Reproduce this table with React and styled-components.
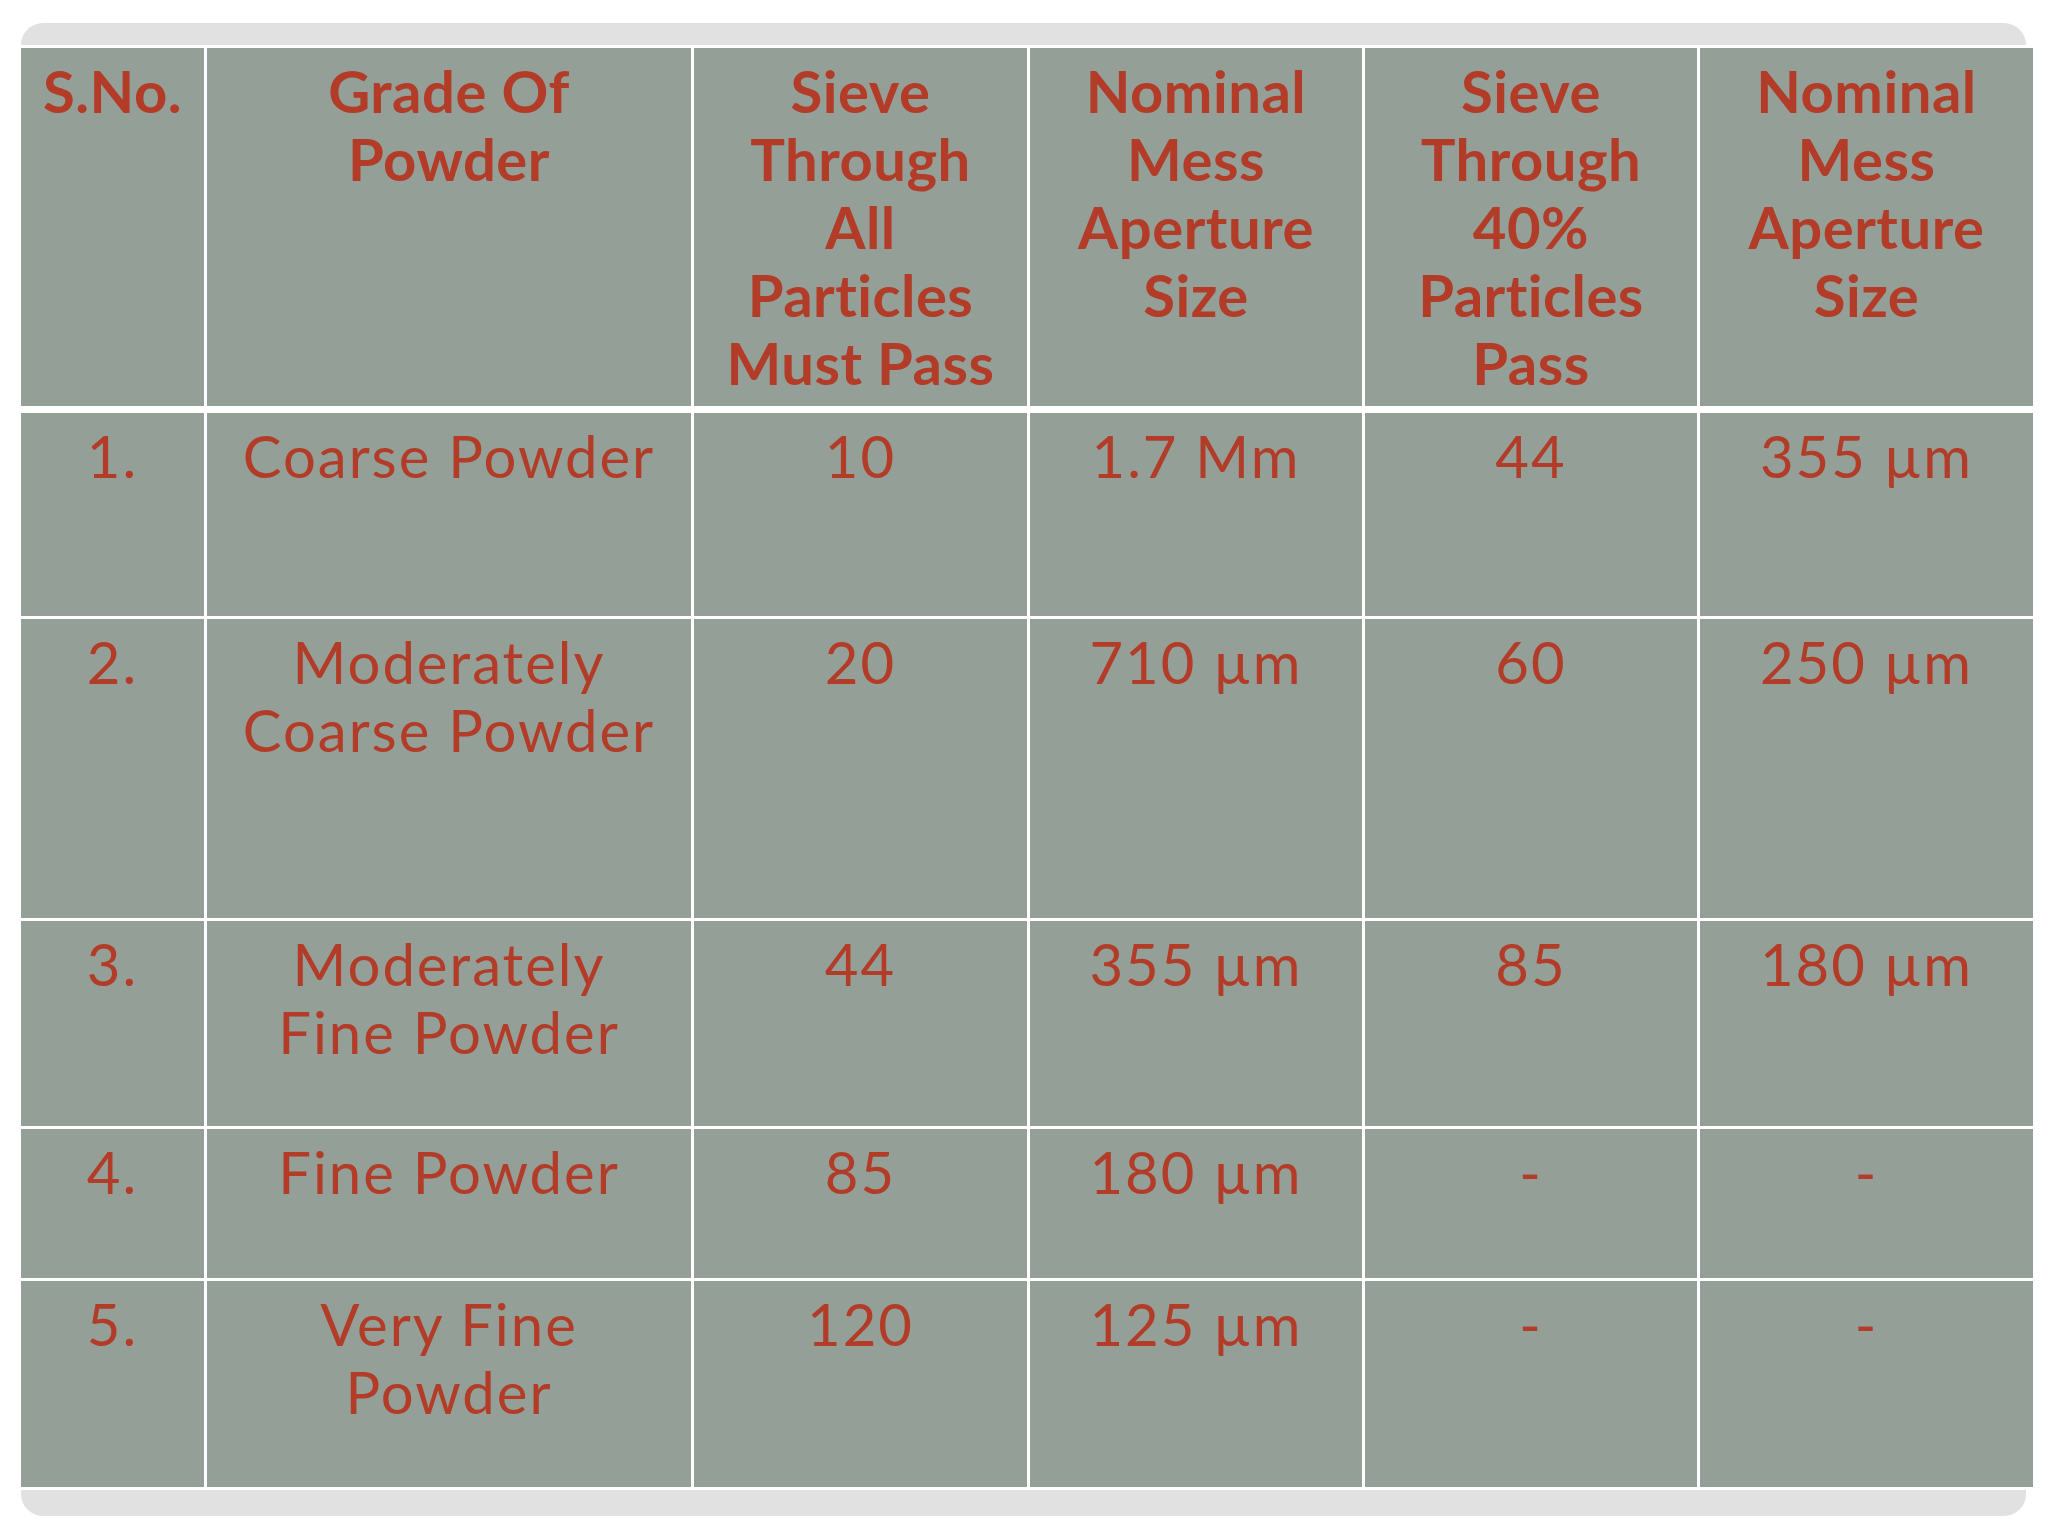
import React from 'react';
import styled, { createGlobalStyle } from 'styled-components';

const GlobalStyle = createGlobalStyle`
  html, body {
    margin: 0;
    padding: 0;
    background: #ffffff;
  }
  body {
    font-family: Lato, "Liberation Sans", sans-serif;
  }
`;

const Slide = styled.div`
  width: 2048px;
  height: 1536px;
  box-sizing: border-box;
  padding: 23px 0 0 21px;
  display: flex;
  flex-direction: column;
`;

const Band = styled.div`
  width: 2005px;
  height: ${props => props.$h}px;
  background: #e1e1e1;
  border-radius: ${props => props.$bottom ? '0 0 22px 22px' : '22px 22px 0 0'};
  margin: ${props => props.$bottom ? '3px 0 0' : '0 0 3px'};
`;

const Table = styled.div`
  display: flex;
  flex-direction: column;
  gap: 3px;
`;

const Row = styled.div`
  display: grid;
  grid-template-columns: 183px 484px 333px 332px 332px 333px;
  column-gap: 3px;
  height: ${props => props.$h}px;
  margin-bottom: ${props => props.$head ? 4 : 0}px;
`;

const Cell = styled.div`
  background: #939f97;
  color: #b23c28;
  text-align: center;
  box-sizing: border-box;
  padding-top: 9px;
  font-family: Lato, "Liberation Sans", sans-serif;
  font-size: 58px;
  line-height: 68px;
  font-weight: ${props => props.$head ? 700 : 400};
  letter-spacing: ${props => props.$head ? '0.5px' : '2px'};
  white-space: nowrap;
`;

const Line = styled.div``;

const header = [
  ['S.No.'],
  ['Grade Of', 'Powder'],
  ['Sieve', 'Through', 'All', 'Particles', 'Must Pass'],
  ['Nominal', 'Mess', 'Aperture', 'Size'],
  ['Sieve', 'Through', '40%', 'Particles', 'Pass'],
  ['Nominal', 'Mess', 'Aperture', 'Size'],
];

const rows = [
  { h: 203, cells: [['1.'], ['Coarse Powder'], ['10'], ['1.7 Mm'], ['44'], ['355 µm']] },
  { h: 299, cells: [['2.'], ['Moderately', 'Coarse Powder'], ['20'], ['710 µm'], ['60'], ['250 µm']] },
  { h: 205, cells: [['3.'], ['Moderately', 'Fine Powder'], ['44'], ['355 µm'], ['85'], ['180 µm']] },
  { h: 149, cells: [['4.'], ['Fine Powder'], ['85'], ['180 µm'], ['-'], ['-']] },
  { h: 206, cells: [['5.'], ['Very Fine', 'Powder'], ['120'], ['125 µm'], ['-'], ['-']] },
];

function renderCell(lines, key, head) {
  return (
    <Cell key={key} $head={head}>
      {lines.map((l, i) => <Line key={i}>{l}</Line>)}
    </Cell>
  );
}

export default function App() {
  return (
    <>
      <GlobalStyle />
      <Slide>
        <Band $h={22} />
        <Table>
          <Row $h={358} $head>
            {header.map((lines, i) => renderCell(lines, i, true))}
          </Row>
          {rows.map((r, ri) => (
            <Row key={ri} $h={r.h}>
              {r.cells.map((lines, i) => renderCell(lines, i, false))}
            </Row>
          ))}
        </Table>
        <Band $h={26} $bottom />
      </Slide>
    </>
  );
}
